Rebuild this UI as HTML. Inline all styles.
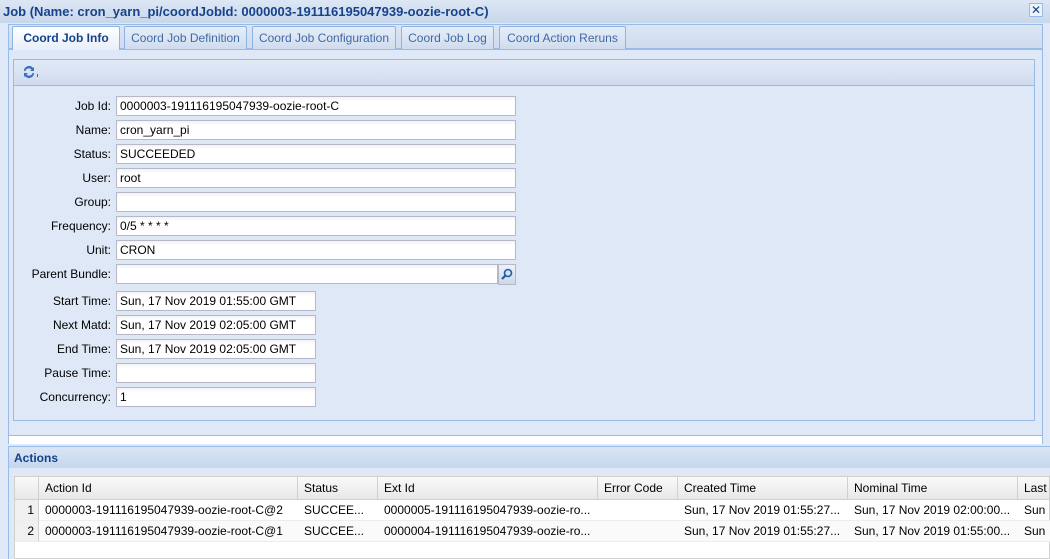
<!DOCTYPE html>
<html><head><style>
*{box-sizing:border-box;margin:0;padding:0}
body{width:1050px;height:559px;overflow:hidden;background:#dfe8f6;font-family:"Liberation Sans",Arial,sans-serif;font-size:12px;position:relative}
.abs{position:absolute}
.title{left:0;top:0;width:1050px;height:23px;background:linear-gradient(#dde7f4,#c8d7ea);color:#15428b;font-weight:bold;font-size:13px;line-height:23px;padding-left:3px}
.close{left:1029px;top:3px;width:14px;height:14px;border:1px solid #99bbe8;background:#eef3fb;color:#15428b;font-size:12px;line-height:12px;text-align:center}
.tabs{left:8px;top:24px;width:1035px;height:26px;border:1px solid #99bbe8;border-bottom:2px solid #99bbe8;background:linear-gradient(#dbe6f5,#cfdcee)}
.tab{top:26px;height:23px;border:1px solid #8db2e3;border-bottom:none;background:linear-gradient(#e6eef9,#d0dcee);color:#416aa3;font-size:12px;line-height:22px;text-align:center;border-radius:2px 2px 0 0}
.tab.act{background:linear-gradient(#fff,#e6eef9);color:#15428b;font-weight:bold;height:25px}
.body{left:8px;top:50px;width:1035px;height:386px;border:1px solid #99bbe8;border-top:none;background:#dfe8f6}
.inner{left:13px;top:59px;width:1022px;height:362px;border:1px solid #99bbe8;background:#dfe8f6}
.tb{left:14px;top:60px;width:1020px;height:26px;background:linear-gradient(#e2eaf7,#cfdbee);border-bottom:1px solid #99bbe8}
.lbl{width:100px;text-align:right;font-size:12px;color:#000;left:11px}
.inp{left:116px;height:20px;border:1px solid #b5b8c8;background:#fff linear-gradient(#f3f3f3,#fff 4px);padding-left:3px;line-height:18px;font-size:12px}
.gap{left:8px;top:436px;width:1035px;height:8px;background:#fff;border-left:1px solid #99bbe8;border-right:1px solid #99bbe8}
.ah{left:8px;top:446px;width:1042px;height:22px;background:linear-gradient(#dae6f4,#c5d6ee);color:#15428b;font-weight:bold;line-height:22px;padding-left:5px;border-top:1px solid #99bbe8;border-left:1px solid #99bbe8}
.grid{left:8px;top:468px;width:1042px;height:91px;background:#dfe8f6;border-left:1px solid #99bbe8}
.gb{left:14px;top:476px;width:1036px;height:83px;background:#fff;border:1px solid #d0d0d0}
.hd{top:477px;height:23px;background:linear-gradient(#f9f9f9,#e8e8e8);border-right:1px solid #d0d0d0;border-bottom:1px solid #d0d0d0;line-height:22px;padding-left:6px;white-space:nowrap;overflow:hidden}
.c{height:21px;line-height:20px;padding-left:6px;white-space:nowrap;overflow:hidden;border-bottom:1px solid #ededed}
.rn{background:#f0f0f0;text-align:right;padding-right:4px;border-right:1px solid #d0d0d0}
</style></head><body>
<div class="abs title">Job (Name: cron_yarn_pi/coordJobId: 0000003-191116195047939-oozie-root-C)</div>
<div class="abs close">✕</div>
<div class="abs tabs"></div>
<div class="abs tab act" style="left:12px;width:108px">Coord Job Info</div>
<div class="abs tab" style="left:124px;width:123px">Coord Job Definition</div>
<div class="abs tab" style="left:252px;width:144px">Coord Job Configuration</div>
<div class="abs tab" style="left:401px;width:93px">Coord Job Log</div>
<div class="abs tab" style="left:499px;width:127px">Coord Action Reruns</div>
<div class="abs body"></div>
<div class="abs inner"></div>
<div class="abs tb"></div>
<svg class="abs" style="left:21px;top:64px" width="18" height="16" viewBox="0 0 18 16"><path d="M3 7a5 5 0 0 1 9-3l1-1v4h-4l1.5-1.5A3.5 3.5 0 0 0 4.5 7z" fill="#3d6fc0"/><path d="M13 9a5 5 0 0 1-9 3l-1 1V9h4l-1.5 1.5A3.5 3.5 0 0 0 11.5 9z" fill="#3d6fc0"/><rect x="16" y="10" width="1" height="3" fill="#3d6fc0"/></svg>

<div class="abs lbl" style="top:99px">Job Id:</div><div class="abs inp" style="top:96px;width:400px">0000003-191116195047939-oozie-root-C</div>
<div class="abs lbl" style="top:123px">Name:</div><div class="abs inp" style="top:120px;width:400px">cron_yarn_pi</div>
<div class="abs lbl" style="top:147px">Status:</div><div class="abs inp" style="top:144px;width:400px">SUCCEEDED</div>
<div class="abs lbl" style="top:171px">User:</div><div class="abs inp" style="top:168px;width:400px">root</div>
<div class="abs lbl" style="top:195px">Group:</div><div class="abs inp" style="top:192px;width:400px"></div>
<div class="abs lbl" style="top:219px">Frequency:</div><div class="abs inp" style="top:216px;width:400px">0/5 * * * *</div>
<div class="abs lbl" style="top:243px">Unit:</div><div class="abs inp" style="top:240px;width:400px">CRON</div>
<div class="abs lbl" style="top:267px">Parent Bundle:</div><div class="abs inp" style="top:264px;width:382px"></div>
<div class="abs" style="left:498px;top:264px;width:18px;height:21px;background:linear-gradient(#eef2f8,#cfd8e4);border:1px solid #b5b8c8"><svg width="16" height="19" viewBox="0 0 16 19"><circle cx="9" cy="8" r="3.5" fill="#cfe4fa" stroke="#1f5ca8" stroke-width="1.6"/><path d="M6.5 10.5L3 14" stroke="#1f5ca8" stroke-width="2.2"/></svg></div>
<div class="abs lbl" style="top:294px">Start Time:</div><div class="abs inp" style="top:291px;width:200px">Sun, 17 Nov 2019 01:55:00 GMT</div>
<div class="abs lbl" style="top:318px">Next Matd:</div><div class="abs inp" style="top:315px;width:200px">Sun, 17 Nov 2019 02:05:00 GMT</div>
<div class="abs lbl" style="top:342px">End Time:</div><div class="abs inp" style="top:339px;width:200px">Sun, 17 Nov 2019 02:05:00 GMT</div>
<div class="abs lbl" style="top:366px">Pause Time:</div><div class="abs inp" style="top:363px;width:200px"></div>
<div class="abs lbl" style="top:390px">Concurrency:</div><div class="abs inp" style="top:387px;width:200px">1</div>

<div class="abs gap"></div>
<div class="abs ah">Actions</div>
<div class="abs grid"></div>
<div class="abs gb"></div>
<div class="abs hd" style="left:15px;width:24px"></div>
<div class="abs hd" style="left:39px;width:259px">Action Id</div>
<div class="abs hd" style="left:298px;width:80px">Status</div>
<div class="abs hd" style="left:378px;width:220px">Ext Id</div>
<div class="abs hd" style="left:598px;width:80px">Error Code</div>
<div class="abs hd" style="left:678px;width:170px">Created Time</div>
<div class="abs hd" style="left:848px;width:170px">Nominal Time</div>
<div class="abs hd" style="left:1018px;width:32px">Last</div>

<div class="abs c rn" style="left:15px;top:500px;width:24px">1</div>
<div class="abs c" style="left:39px;top:500px;width:259px">0000003-191116195047939-oozie-root-C@2</div>
<div class="abs c" style="left:298px;top:500px;width:80px">SUCCEE...</div>
<div class="abs c" style="left:378px;top:500px;width:220px">0000005-191116195047939-oozie-ro...</div>
<div class="abs c" style="left:598px;top:500px;width:80px"></div>
<div class="abs c" style="left:678px;top:500px;width:170px">Sun, 17 Nov 2019 01:55:27...</div>
<div class="abs c" style="left:848px;top:500px;width:170px">Sun, 17 Nov 2019 02:00:00...</div>
<div class="abs c" style="left:1018px;top:500px;width:32px">Sun</div>

<div class="abs" style="left:39px;top:521px;width:1011px;height:21px;background:#fafafa"></div>
<div class="abs c rn" style="left:15px;top:521px;width:24px">2</div>
<div class="abs c" style="left:39px;top:521px;width:259px">0000003-191116195047939-oozie-root-C@1</div>
<div class="abs c" style="left:298px;top:521px;width:80px">SUCCEE...</div>
<div class="abs c" style="left:378px;top:521px;width:220px">0000004-191116195047939-oozie-ro...</div>
<div class="abs c" style="left:598px;top:521px;width:80px"></div>
<div class="abs c" style="left:678px;top:521px;width:170px">Sun, 17 Nov 2019 01:55:27...</div>
<div class="abs c" style="left:848px;top:521px;width:170px">Sun, 17 Nov 2019 01:55:00...</div>
<div class="abs c" style="left:1018px;top:521px;width:32px">Sun</div>
</body></html>
